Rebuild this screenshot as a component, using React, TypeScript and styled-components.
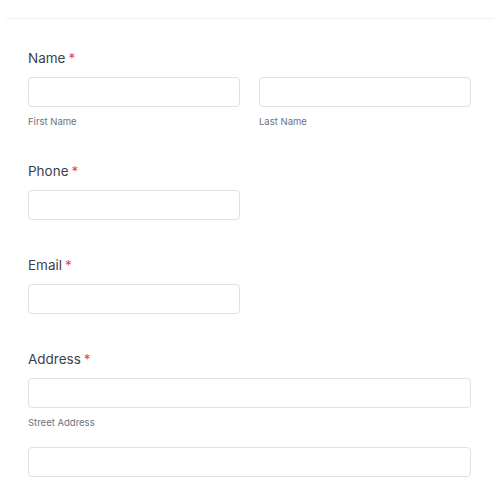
import * as React from "react";
import styled, { createGlobalStyle } from "styled-components";

const GlobalStyle = createGlobalStyle`
  html, body {
    margin: 0;
    padding: 0;
    background: #ffffff;
    font-family: Inter, "Noto Sans", sans-serif;
  }
`;

const Page = styled.div`
  width: 500px;
  height: 484px;
  overflow: hidden;
  box-sizing: border-box;
  padding: 18px 6px 0;
`;

const Divider = styled.hr`
  margin: 0;
  border: 0;
  border-top: 1px solid #eef0f3;
`;

const Form = styled.form`
  display: flex;
  flex-direction: column;
  width: 443px;
  margin: 29px 0 0 22px;
`;

const Field = styled.div<{ $gap: number }>`
  display: flex;
  flex-direction: column;
  margin-bottom: ${(p) => p.$gap}px;
`;

const Label = styled.label`
  font-size: 13.5px;
  line-height: 20px;
  color: #3b3f4c;
  margin-bottom: 9px;
`;

const Required = styled.span`
  color: #e5484d;
  margin-left: 3px;
`;

const Row = styled.div`
  display: grid;
  grid-template-columns: 1fr 1fr;
  column-gap: 19px;
`;

const Part = styled.div<{ $gap?: number }>`
  display: flex;
  flex-direction: column;
  margin-bottom: ${(p) => p.$gap ?? 0}px;
`;

const Input = styled.input<{ $half?: boolean }>`
  box-sizing: border-box;
  height: 30px;
  width: ${(p) => (p.$half ? "212px" : "100%")};
  border: 1px solid #dde1e9;
  border-radius: 4px;
  background: #ffffff;
  padding: 0 10px;
  font-family: inherit;
  font-size: 13px;
  outline: none;
`;

const SubLabel = styled.span`
  font-size: 9.5px;
  line-height: 14px;
  color: #6d7280;
  margin-top: 8px;
`;

export default function App() {
  return (
    <>
      <GlobalStyle />
      <Page>
        <Divider />
        <Form>
          <Field $gap={32}>
            <Label>
              Name<Required>*</Required>
            </Label>
            <Row>
              <Part>
                <Input />
                <SubLabel>First Name</SubLabel>
              </Part>
              <Part>
                <Input />
                <SubLabel>Last Name</SubLabel>
              </Part>
            </Row>
          </Field>
          <Field $gap={35}>
            <Label>
              Phone<Required>*</Required>
            </Label>
            <Input $half />
          </Field>
          <Field $gap={35}>
            <Label>
              Email<Required>*</Required>
            </Label>
            <Input $half />
          </Field>
          <Field $gap={0}>
            <Label>
              Address<Required>*</Required>
            </Label>
            <Part $gap={17}>
              <Input />
              <SubLabel>Street Address</SubLabel>
            </Part>
            <Input />
          </Field>
        </Form>
      </Page>
    </>
  );
}
